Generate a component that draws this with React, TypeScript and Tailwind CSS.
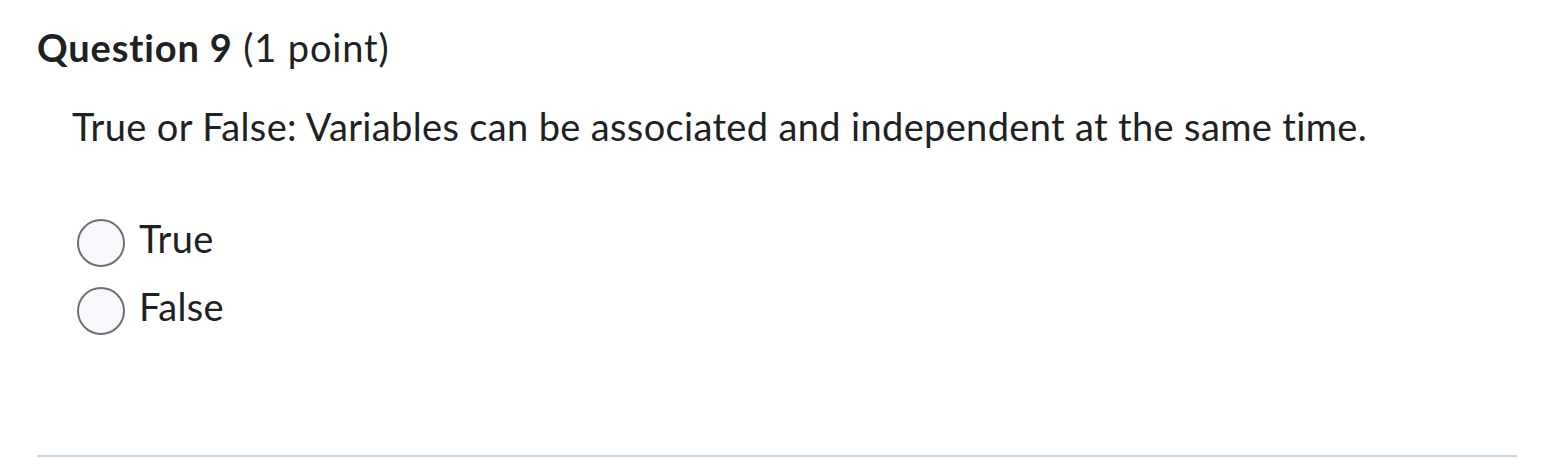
import React from "react";

function Option({ label }: { label: string }) {
  return (
    <label className="flex items-start">
      <span className="mt-[3px] w-[48px] h-[48px] rounded-full border-2 border-[#6d7176] bg-[#f7f9fd] shrink-0" />
      <span className="ml-[14px] text-[38px] leading-[44px] tracking-[0.35px] text-[#202122]">{label}</span>
    </label>
  );
}

export default function App() {
  return (
    <div
      className="w-[1566px] h-[458px] bg-white pl-[37px] pr-[49px] flex flex-col [font-variant-ligatures:none]"
      style={{ fontFamily: "Lato, 'Noto Sans', sans-serif" }}
    >
      <h2 className="mt-[25px] text-[38px] leading-[44px] tracking-[0.85px] text-[#202122]">
        <span className="font-bold">Question 9</span> <span className="font-normal">(1 point)</span>
      </h2>
      <p className="mt-[35px] pl-[35px] text-[38px] leading-[44px] tracking-[0.35px] text-[#202122]">
        True or False: Variables can be associated and independent at the same time.
      </p>
      <div className="mt-[68px] pl-[40px] flex flex-col gap-[17px]">
        <Option label="True" />
        <Option label="False" />
      </div>
      <div className="mt-auto mb-[1px] h-[2px] bg-[#cdd3da]" />
    </div>
  );
}
